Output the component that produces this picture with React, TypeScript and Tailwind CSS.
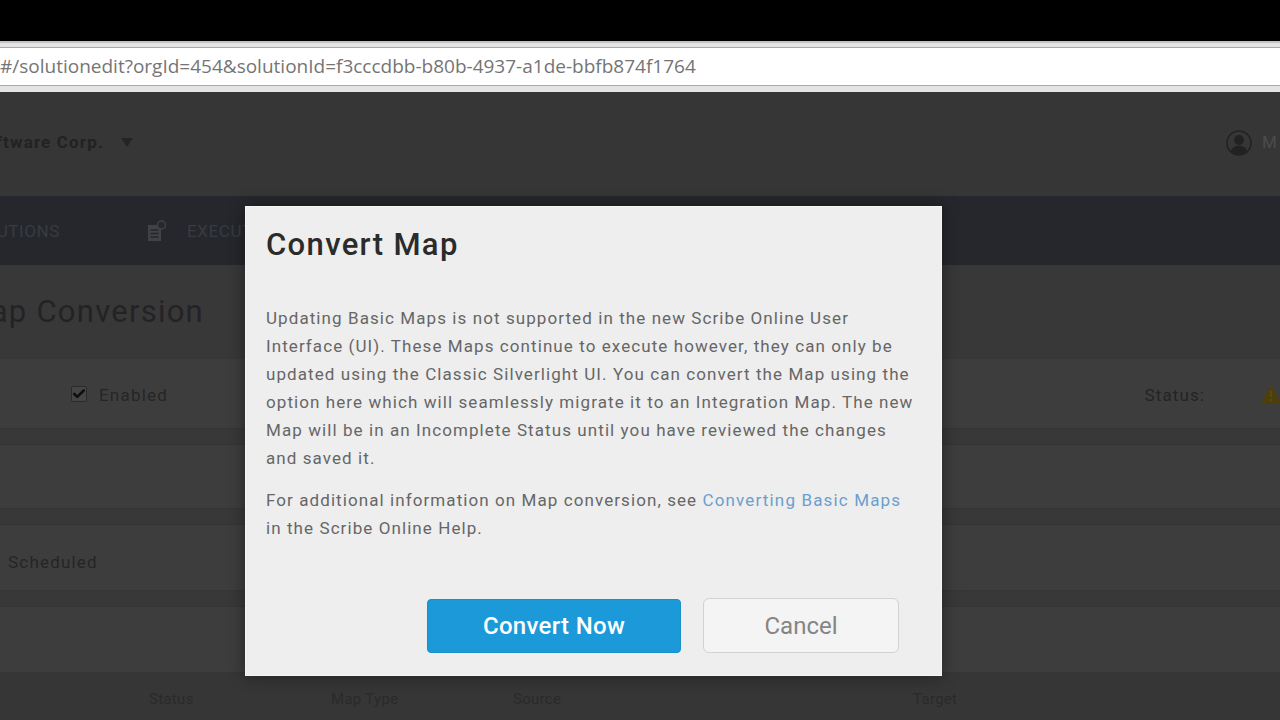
import { Check } from 'lucide-react'

function Strip() {
  return <div className="h-[17px] shrink-0 bg-[#383838] border-y border-[#353535]" />
}

export default function App() {
  return (
    <div className="relative w-[1280px] h-[720px] overflow-hidden bg-black font-['Roboto',sans-serif]">
      {/* Browser chrome */}
      <div className="h-[41px] bg-black" />
      <div className="h-[51px] bg-[#e4e4e4] border-t-2 border-[#c4c4c4] pt-[4px]">
        <div className="h-[39px] bg-white border-y border-[#a9a9a9] flex items-center font-['Open_Sans',sans-serif] text-[19px] text-[#757575] whitespace-nowrap">
          #/solutionedit?orgId=454&amp;solutionId=f3cccdbb-b80b-4937-a1de-bbfb874f1764
        </div>
      </div>

      {/* Dimmed app page */}
      <div className="h-[628px] bg-[#363636] flex flex-col">
        <div className="h-[104px] shrink-0 flex items-center justify-between">
          <div className="flex items-center -mt-[4px]">
            <div className="w-[104px] flex justify-end overflow-hidden whitespace-nowrap text-[17px] font-bold tracking-[1.15px] text-[#222222] mt-[2px]">
              Software Corp.
            </div>
            <div className="ml-[17px] w-0 h-0 border-x-[6px] border-x-transparent border-t-[9px] border-t-[#242424]" />
          </div>
          <div className="flex items-center gap-[10px] w-[54px] overflow-hidden -mt-[3px]">
            <svg viewBox="0 0 26 26" className="w-[26px] h-[26px] shrink-0" fill="none">
              <circle cx="13" cy="13" r="12" stroke="#222222" strokeWidth="1.6" />
              <circle cx="13" cy="10" r="5" fill="#222222" />
              <path d="M5 21.500c.8-4 4-5 5.800-5.700h4.400c1.800.7 5 1.700 5.800 5.700a12 12 0 0 1-16 0z" fill="#222222" />
            </svg>
            <span className="text-[17px] text-[#4c4c4c]">M</span>
          </div>
        </div>

        <div className="h-[69px] shrink-0 bg-[#25272c] flex items-center text-[17px] tracking-[0.6px] text-[#383b40]">
          <div className="w-[60px] flex justify-end overflow-hidden whitespace-nowrap mt-[2px]">SOLUTIONS</div>
          <svg viewBox="0 0 20 22" className="ml-[87px] w-[20px] h-[22px]" fill="none">
            <path d="M1 5h11l2 2v14H1z" fill="#404246" />
            <path d="M3.500 10h8M3.500 13.500h8M3.500 17h8" stroke="#25272c" strokeWidth="1.3" />
            <circle cx="14.500" cy="5" r="4" fill="#25272c" stroke="#404246" strokeWidth="1.400" />
          </svg>
          <span className="ml-[20px] mt-[2px]">EXECUTIONS</span>
        </div>

        <div className="h-[93px] shrink-0 bg-[#383838] flex items-center">
          <div className="w-[204px] flex justify-end overflow-hidden whitespace-nowrap text-[31px] tracking-[1.25px] text-[#232326] mt-[1px]">
            Map Conversion
          </div>
        </div>

        <div className="h-[70px] shrink-0 bg-[#3d3d3d] border-t border-[#383838] flex items-center justify-between">
          <div className="flex items-center pl-[71px]">
            <div className="w-[16px] h-[16px] rounded-[2px] bg-[#454545] border border-[#2a2a2a] flex items-center justify-center">
              <Check size={14} strokeWidth={4.5} color="#0f0f0f" />
            </div>
            <span className="ml-[12px] mt-[4px] text-[17px] tracking-[1.2px] text-[#262626]">Enabled</span>
          </div>
          <div className="flex items-center">
            <span className="mt-[4px] text-[17px] tracking-[1.1px] text-[#242424]">Status:</span>
            <svg viewBox="0 0 20 18" className="ml-[56px] w-[20px] h-[18px] shrink-0 -mr-[1px]">
              <path d="M10 0l10 18H0z" fill="#4d3f0a" />
              <path d="M10 6v6M10 14v2" stroke="#5e4e18" strokeWidth="1.500" />
            </svg>
          </div>
        </div>
        <Strip />
        <div className="h-[63px] shrink-0 bg-[#3d3d3d]" />
        <Strip />
        <div className="h-[65px] shrink-0 bg-[#3d3d3d] flex items-center pl-[8px] pt-[10px] text-[17px] tracking-[1.2px] text-[#252525]">
          Scheduled
        </div>
        <Strip />
        <div className="h-[65px] shrink-0 bg-[#3d3d3d]" />
        <div className="flex-1 bg-[#363636] grid grid-cols-[150px_182px_182px_400px_1fr] items-center pt-[7px] text-[15px] tracking-[0.3px] text-[#2a2a2a]">
          <span className="col-start-2 -ml-[1px]">Status</span>
          <span className="-ml-[1px]">Map Type</span>
          <span className="-ml-[1px]">Source</span>
          <span className="-ml-[1px]">Target</span>
        </div>
      </div>

      {/* Modal */}
      <div className="absolute left-[245px] top-[206px] w-[697px] h-[470px] bg-[#eeeeee] border border-white/40 shadow-[0_0_16px_rgba(0,0,0,0.4)] pl-[20px] pr-[24px] flex flex-col">
        <h1 className="mt-[18px] text-[31px] leading-[40px] font-medium tracking-[1.35px] text-[#2b2b2b]">Convert Map</h1>
        <p className="mt-[39px] text-[17px] leading-[28px] tracking-[1.08px] text-[#666666]">
          Updating Basic Maps is not supported in the new Scribe Online User Interface (UI). These Maps continue to execute however, they can only be updated using the Classic Silverlight UI. You can convert the Map using the option here which will seamlessly migrate it to an Integration Map. The new Map will be in an Incomplete Status until you have reviewed the changes and saved it.
        </p>
        <p className="mt-[14px] text-[17px] leading-[28px] tracking-[1.08px] text-[#666666]">
          For additional information on Map conversion, see <span className="text-[#6a9fcf] tracking-[1.15px]">Converting Basic Maps</span> in the Scribe Online Help.
        </p>
        <div className="mt-[56px] flex items-center gap-[22px] pl-[161px]">
          <button className="w-[254px] h-[54px] rounded-[4px] bg-[#1c99d8] border border-[#1a8fca] text-white text-[24px] font-medium tracking-[0.3px]">Convert Now</button>
          <button className="w-[196px] h-[55px] rounded-[6px] bg-[#f4f4f4] border border-[#d2d2d2] text-[#858585] text-[24px]">Cancel</button>
        </div>
      </div>
    </div>
  )
}
